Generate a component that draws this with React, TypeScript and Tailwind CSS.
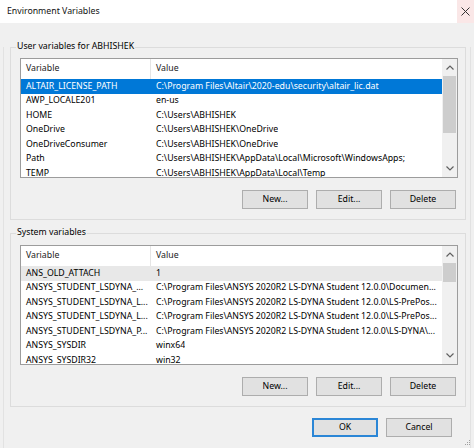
type Row = [string, string];

const userRows: Row[] = [
  ["ALTAIR_LICENSE_PATH", "C:\\Program Files\\Altair\\2020-edu\\security\\altair_lic.dat"],
  ["AWP_LOCALE201", "en-us"],
  ["HOME", "C:\\Users\\ABHISHEK"],
  ["OneDrive", "C:\\Users\\ABHISHEK\\OneDrive"],
  ["OneDriveConsumer", "C:\\Users\\ABHISHEK\\OneDrive"],
  ["Path", "C:\\Users\\ABHISHEK\\AppData\\Local\\Microsoft\\WindowsApps;"],
  ["TEMP", "C:\\Users\\ABHISHEK\\AppData\\Local\\Temp"],
];

const systemRows: Row[] = [
  ["ANS_OLD_ATTACH", "1"],
  ["ANSYS_STUDENT_LSDYNA_...", "C:\\Program Files\\ANSYS 2020R2 LS-DYNA Student 12.0.0\\Documen..."],
  ["ANSYS_STUDENT_LSDYNA_L...", "C:\\Program Files\\ANSYS 2020R2 LS-DYNA Student 12.0.0\\LS-PrePos..."],
  ["ANSYS_STUDENT_LSDYNA_L...", "C:\\Program Files\\ANSYS 2020R2 LS-DYNA Student 12.0.0\\LS-PrePos..."],
  ["ANSYS_STUDENT_LSDYNA_P...", "C:\\Program Files\\ANSYS 2020R2 LS-DYNA Student 12.0.0\\LS-DYNA\\..."],
  ["ANSYS_SYSDIR", "winx64"],
  ["ANSYS_SYSDIR32", "win32"],
];

function Chevron({ up }: { up?: boolean }) {
  return (
    <svg width="8" height="5" viewBox="0 0 8 5" className="block">
      <path
        d={up ? "M0.5 4.5 L4 1 L7.5 4.5" : "M0.5 0.5 L4 4 L7.5 0.5"}
        fill="none"
        stroke="#606060"
        strokeWidth="1.2"
      />
    </svg>
  );
}

type ListViewProps = {
  rows: Row[];
  active: boolean;
  thumbHeight: number;
};

function ListView({ rows, active, thumbHeight }: ListViewProps) {
  return (
    <div className="flex w-[438px] h-[120px] border border-[#9c9c9c] bg-white">
      <div className="flex-1 overflow-hidden">
        <div className="flex h-[20px] text-[#222]">
          <div className="w-[130px] shrink-0 pl-[5px] flex items-center border-r border-[#e5e5e5]">Variable</div>
          <div className="pl-[5px] flex items-center">Value</div>
        </div>
        {rows.map(([name, value], i) => {
          const selected = i === 0;
          const rowColor = selected
            ? active
              ? "bg-[#0078d7] text-white"
              : "bg-[#e8e8e8] text-black"
            : "text-black";
          return (
            <div key={i} className={`flex h-[14.5px] items-center whitespace-nowrap ${rowColor}`}>
              <div className="w-[130px] shrink-0 pl-[5px] overflow-hidden">{name}</div>
              <div className="pl-[5px] overflow-hidden">{value}</div>
            </div>
          );
        })}
      </div>
      <div className="w-[15px] shrink-0 bg-[#f0f0f0] flex flex-col">
        <div className="h-[17px] flex items-center justify-center">
          <Chevron up />
        </div>
        <div className="flex-1 flex flex-col px-[1px]">
          <div className="bg-[#cdcdcd]" style={{ height: thumbHeight }} />
        </div>
        <div className="h-[17px] flex items-center justify-center">
          <Chevron />
        </div>
      </div>
    </div>
  );
}

function Button({ label, primary }: { label: string; primary?: boolean }) {
  return (
    <button
      className={`w-[66px] h-[19px] bg-[#e1e1e1] text-black leading-none ${
        primary ? "border-2 border-[#2b86d6]" : "border border-[#adadad]"
      }`}
    >
      {label}
    </button>
  );
}

function Group({
  title,
  rows,
  active,
  thumbHeight,
  heightClass,
  marginClass,
  padTopClass,
}: {
  title: string;
  rows: Row[];
  active: boolean;
  thumbHeight: number;
  heightClass: string;
  marginClass: string;
  padTopClass: string;
}) {
  return (
    <div className={`relative border border-[#dcdcdc] pl-[9px] pr-[7px] ${heightClass} ${marginClass} ${padTopClass}`}>
      <span className="absolute -top-[8px] left-[5px] px-[1px] bg-[#f0f0f0] leading-[12px] text-black">
        {title}
      </span>
      <ListView rows={rows} active={active} thumbHeight={thumbHeight} />
      <div className="flex justify-end gap-[8px] mt-[12px] pr-[2px]">
        <Button label="New..." />
        <Button label="Edit..." />
        <Button label="Delete" />
      </div>
    </div>
  );
}

export default function App() {
  return (
    <div className="relative w-[474px] h-[448px] overflow-hidden bg-[#f0f0f0] text-[8.75px] font-['Noto_Sans',sans-serif]">
      <div className="flex h-[23px] bg-white items-stretch justify-between">
        <div className="pl-[7px] flex items-center text-[#111]">Environment Variables</div>
        <div className="w-[17px] bg-[#fae7e7] flex items-center justify-center">
          <svg width="9" height="9" viewBox="0 0 9 9">
            <path d="M0.5 0.5 L8.5 8.5 M8.5 0.5 L0.5 8.5" stroke="#333" strokeWidth="1" />
          </svg>
        </div>
      </div>
      <div className="mx-[3px] h-[425px] border-x border-[#e2e2e2] pl-[6px] pr-[4px]">
        <Group
          title="User variables for ABHISHEK"
          rows={userRows}
          active
          thumbHeight={57}
          heightClass="h-[173px]"
          marginClass="mt-[24px]"
          padTopClass="pt-[10px]"
        />
        <Group
          title="System variables"
          rows={systemRows}
          active={false}
          thumbHeight={19}
          heightClass="h-[174px]"
          marginClass="mt-[13px]"
          padTopClass="pt-[11px]"
        />
        <div className="flex justify-end gap-[8px] mt-[11px] pr-[14px]">
          <Button label="OK" primary />
          <Button label="Cancel" />
        </div>
      </div>
      <svg className="absolute right-[3px] bottom-[2px]" width="7" height="7" viewBox="0 0 7 7">
        <rect x="5" y="1" width="1" height="1" fill="#a0a0a0" />
        <rect x="3" y="3" width="1" height="1" fill="#a0a0a0" />
        <rect x="5" y="3" width="1" height="1" fill="#a0a0a0" />
        <rect x="1" y="5" width="1" height="1" fill="#a0a0a0" />
        <rect x="3" y="5" width="1" height="1" fill="#a0a0a0" />
        <rect x="5" y="5" width="1" height="1" fill="#a0a0a0" />
      </svg>
    </div>
  );
}
